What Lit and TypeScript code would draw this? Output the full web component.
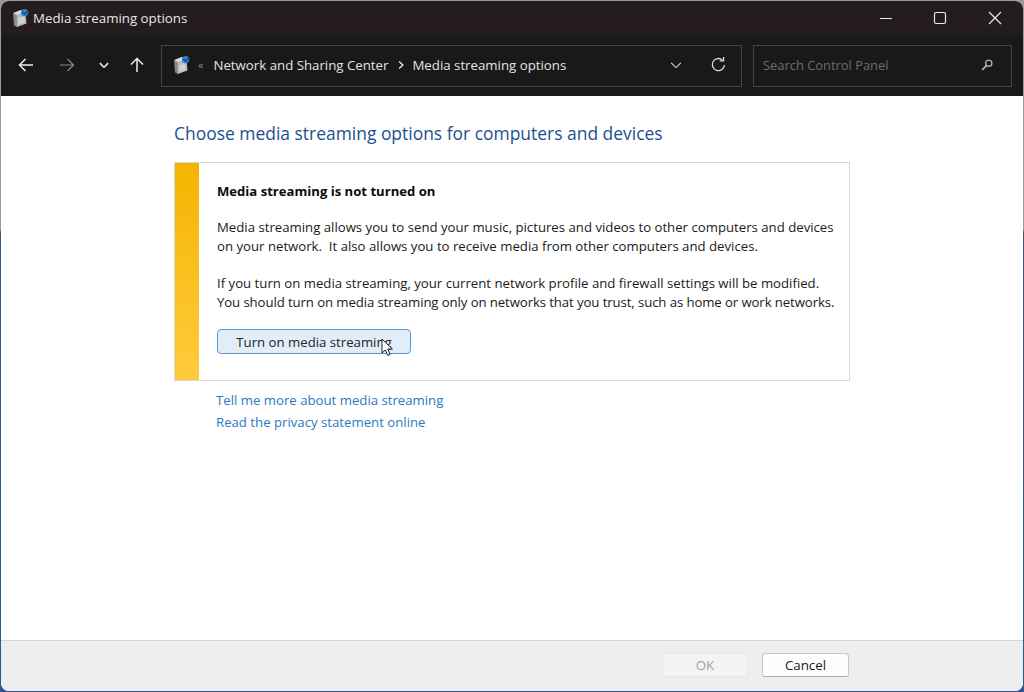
import { LitElement, html, css, svg } from 'lit';
import { customElement } from 'lit/decorators.js';

const panelIcon = (w: number, h: number) => html`
  <svg width=${w} height=${h} viewBox="0 0 18 20">
    <path d="M1.5 5 L9 2 L13.5 4 L14.5 15.5 L5 19 L2 17 Z" fill="#b7babb"></path>
    <path d="M1.5 5 L4.6 6.8 L5 19 L2 17 Z" fill="#85888a"></path>
    <path d="M1.5 5 L9 2 L12 4 L4.6 6.8 Z" fill="#dcdedf"></path>
    <path d="M6.2 10 L12.4 8.6 L12.8 14.4 L6.5 16.4 Z" fill="#d0d2d3"></path>
    <circle cx="12.6" cy="4.6" r="3.7" fill="#2d80d6"></circle>
    <path d="M10.4 3.8 L12.8 6.2 L15.8 2.8" fill="none" stroke="#0f3d78" stroke-width="1.1"></path>
  </svg>
`;

const stroke = (size: number, body: unknown) => html`
  <svg width=${size} height=${size} viewBox="0 0 16 16" fill="none" stroke="currentColor" stroke-width="1.2">${body}</svg>
`;

@customElement('app-root')
export class AppRoot extends LitElement {
  static styles = css`
    :host {
      display: block;
      width: 1024px;
      height: 692px;
      overflow: hidden;
      font-family: "Open Sans", "Noto Sans", sans-serif;
      background: linear-gradient(180deg, #9a9a9a 0, #9a9a9a 230px, #35597c 232px, #35597c 490px, #2d5c9c 492px, #2a5698 100%);
    }

    .window {
      box-sizing: border-box;
      margin: 1px 0 0 1px;
      width: 1022px;
      height: 690px;
      border-radius: 8px;
      overflow: hidden;
      display: flex;
      flex-direction: column;
      background: #fff;
    }

    .titlebar {
      height: 35px;
      flex: none;
      box-sizing: border-box;
      display: flex;
      align-items: center;
      padding: 0 1px 1px 11px;
      background: #241c1f;
      color: #e6e6e6;
      font-size: 13.3px;
    }
    .titlebar .title { flex: 1; margin-left: 3px; }

    .winbtn {
      width: 55px;
      height: 35px;
      display: flex;
      align-items: center;
      justify-content: center;
      color: #e8e8e8;
    }

    .navbar {
      height: 60px;
      flex: none;
      box-sizing: border-box;
      display: flex;
      align-items: center;
      padding: 0 10px 1px 0;
      background: #191919;
      color: #eee;
    }

    .navbtns {
      width: 160px;
      flex: none;
      display: flex;
      align-items: center;
      padding: 0 0 2px 17px;
      box-sizing: border-box;
    }
    .navbtns .back { margin-right: 25px; display: flex; }
    .navbtns .fwd { margin-right: 23px; display: flex; color: #8a8a8a; }
    .navbtns .down { margin-right: 19px; display: flex; }
    .navbtns .up { display: flex; }
    .navbtns .back svg, .navbtns .up svg { stroke-width: 1.5; }

    .address, .search {
      box-sizing: border-box;
      height: 42px;
      border: 1px solid #454545;
      display: flex;
      align-items: center;
      font-size: 13.25px;
      padding-bottom: 2px;
    }

    .address {
      width: 581px;
      flex: none;
      padding-left: 11px;
      padding-right: 14px;
      color: #e4e4e4;
    }
    .address .chev { color: #8a8a8a; margin: 0 10px 0 7px; font-size: 11px; }
    .address .sep { display: flex; margin: 0 6px 0 8px; color: #f0f0f0; }
    .address .spacer { flex: 1; }
    .address .drop { display: flex; margin-right: 27px; color: #ddd; }
    .address .refresh { display: flex; color: #ddd; }

    .search {
      width: 259px;
      flex: none;
      margin-left: 11px;
      padding-left: 9px;
      padding-right: 17px;
      font-size: 12.9px;
      color: #6e6e6e;
      justify-content: space-between;
    }
    .search svg { color: #b5b5b5; }

    .content {
      flex: 1;
      min-height: 0;
      padding: 24px 0 0 173px;
      background: #fff;
    }

    h1 {
      margin: 0 0 16px;
      font-size: 17.45px;
      font-weight: 400;
      line-height: 26px;
      color: #1d4f91;
    }

    .card {
      box-sizing: border-box;
      width: 676px;
      height: 219px;
      display: flex;
      border: 1px solid #d9d9d9;
    }

    .stripe {
      width: 24px;
      flex: none;
      background: linear-gradient(180deg, #f4b400 0%, #ffcb3d 100%);
    }

    .card-body {
      padding: 19px 0 0 18px;
      min-width: 0;
      font-size: 13.2px;
      line-height: 19px;
      color: #1a1a1a;
      white-space: nowrap;
    }

    .card-title {
      font-size: 13.1px;
      font-weight: 700;
      color: #0a0a0a;
      margin-bottom: 17px;
    }
    .para { margin-bottom: 18px; }
    .tight { letter-spacing: -0.1px; }

    .turn-on {
      position: relative;
      box-sizing: border-box;
      width: 194px;
      height: 25px;
      margin-top: 17px;
      padding-top: 1px;
      display: flex;
      align-items: center;
      justify-content: center;
      border: 1px solid #5a9bd8;
      border-radius: 4px;
      background: #e1eefa;
      color: #222;
      font-size: 13.2px;
    }

    .cursor {
      position: absolute;
      left: 163px;
      top: 8px;
    }

    .links {
      padding: 8px 0 0 42px;
      font-size: 13.2px;
      line-height: 22px;
      color: #2a7ac0;
    }

    .footer {
      height: 51px;
      flex: none;
      box-sizing: border-box;
      display: flex;
      justify-content: flex-end;
      align-items: center;
      gap: 14px;
      padding: 0 174px 2px 0;
      background: #eeeeee;
      border-top: 1px solid #d4d4d4;
    }

    .btn {
      box-sizing: border-box;
      width: 86px;
      height: 24px;
      display: flex;
      align-items: center;
      justify-content: center;
      font-size: 13.3px;
      border-radius: 3px;
      border: 1px solid #c9c9c9;
      border-bottom-color: #adadad;
      background: #fdfdfd;
      color: #1b1b1b;
    }
    .btn.off {
      width: 86px;
      background: #f4f4f4;
      border-color: #e6e6e6;
      color: #a0a0a0;
    }
    .btn.cancel { width: 87px; }
  `;

  render() {
    return html`
      <div class="window">
        <div class="titlebar">
          ${panelIcon(18, 20)}
          <span class="title">Media streaming options</span>
          <div class="winbtn">${stroke(16, svg`<path d="M3 8.5h12"></path>`)}</div>
          <div class="winbtn">
            ${stroke(16, svg`<rect x="2.5" y="2.5" width="11" height="11" rx="1.5"></rect>`)}
          </div>
          <div class="winbtn">${stroke(16, svg`<path d="M2 2l12 12M14 2L2 14"></path>`)}</div>
        </div>

        <div class="navbar">
          <div class="navbtns">
            <span class="back">${stroke(16, svg`<path d="M15 8H1.5M7.5 2L1.5 8l6 6"></path>`)}</span>
            <span class="fwd">${stroke(16, svg`<path d="M1 8h13.5M8.5 2l6 6-6 6"></path>`)}</span>
            <span class="down">${stroke(12, svg`<path d="M2.5 5.5L8 11l5.5-5.5" stroke-width="1.9"></path>`)}</span>
            <span class="up">${stroke(16, svg`<path d="M8 15V1.5M2 7.5l6-6 6 6"></path>`)}</span>
          </div>

          <div class="address">
            ${panelIcon(18, 20)}
            <span class="chev">«</span>
            <span>Network and Sharing Center</span>
            <span class="sep">${stroke(10, svg`<path d="M5 2.5l6 5.5-6 5.5" stroke-width="2"></path>`)}</span>
            <span>Media streaming options</span>
            <span class="spacer"></span>
            <span class="drop">${stroke(14, svg`<path d="M2.5 5.5L8 11l5.5-5.5"></path>`)}</span>
            <span class="refresh">
              ${stroke(17, svg`<path d="M13.6 8.5A5.7 5.7 0 1 1 11.8 3.9"></path><path d="M12.8 1v3.6H9.2"></path>`)}
            </span>
          </div>

          <div class="search">
            <span>Search Control Panel</span>
            ${stroke(14, svg`<circle cx="10" cy="6" r="3.6" stroke-width="1.5"></circle><path d="M7.4 8.6L2.5 13.5" stroke-width="2"></path>`)}
          </div>
        </div>

        <div class="content">
          <h1>Choose media streaming options for computers and devices</h1>
          <div class="card">
            <div class="stripe"></div>
            <div class="card-body">
              <div class="card-title">Media streaming is not turned on</div>
              <div class="para">
                Media streaming allows you to send your music, pictures and videos to other computers and devices<br />
                on your network.&nbsp; It also allows you to receive media from other computers and devices.
              </div>
              <div>
                If you turn on media streaming, your current network profile and firewall settings will be modified.<br />
                <span class="tight">You should turn on media streaming only on networks that you trust, such as home or work networks.</span>
              </div>
              <div class="turn-on">
                Turn on media streaming
                <svg class="cursor" width="13" height="19" viewBox="0 0 13 19">
                  <path d="M1 1v14l3.4-3 2.3 5.4 2.4-1-2.3-5.3h4.6z" fill="#fff" stroke="#222" stroke-width="1"></path>
                </svg>
              </div>
            </div>
          </div>
          <div class="links">
            <div>Tell me more about media streaming</div>
            <div>Read the privacy statement online</div>
          </div>
        </div>

        <div class="footer">
          <div class="btn off">OK</div>
          <div class="btn cancel">Cancel</div>
        </div>
      </div>
    `;
  }
}
